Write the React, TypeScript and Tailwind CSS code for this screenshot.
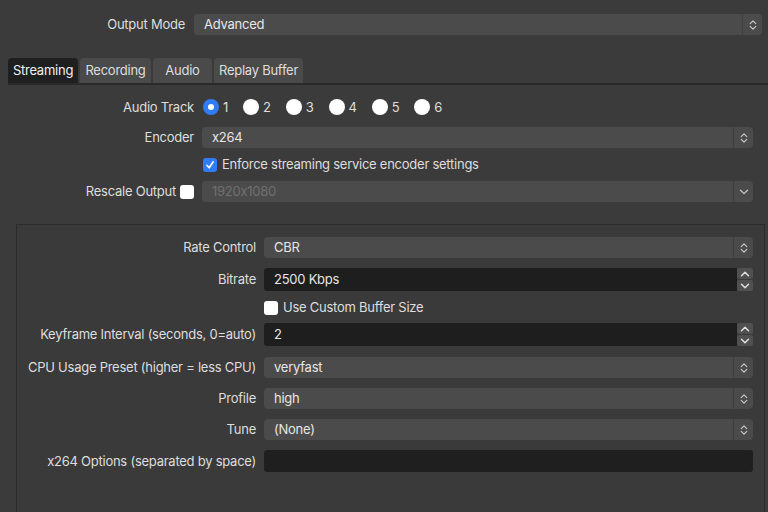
import type { ReactNode } from 'react'

function UpDown() {
  return (
    <svg width="8" height="12" viewBox="0 0 8 12" fill="none" stroke="#c8c8c8" strokeWidth="1.2" strokeLinecap="round" strokeLinejoin="round">
      <path d="M1.2 4.6 L4 1.8 L6.8 4.6" />
      <path d="M1.2 7.4 L4 10.2 L6.8 7.4" />
    </svg>
  )
}

function Combo({ value, disabled, single }: { value: string; disabled?: boolean; single?: boolean }) {
  return (
    <div className="flex h-[21px] flex-1 rounded-[4px] bg-[#4b4b4b] overflow-hidden">
      <div className={`flex flex-1 items-center pl-[10px] pt-px ${disabled ? 'text-[#707070]' : 'text-[#e6e6e6]'}`}>{value}</div>
      <div className="w-px bg-[#3e3e3e]" />
      <div className="flex w-[19px] items-center justify-center">
        {single ? (
          <svg width="10" height="6" viewBox="0 0 10 6" fill="none" stroke="#c8c8c8" strokeWidth="1.3" strokeLinecap="round" strokeLinejoin="round">
            <path d="M1.5 1.2 L5 4.6 L8.5 1.2" />
          </svg>
        ) : (
          <UpDown />
        )}
      </div>
    </div>
  )
}

function SpinBox({ value }: { value: string }) {
  return (
    <div className="flex h-[23px] flex-1">
      <div className="flex flex-1 items-center rounded-l-[3px] bg-[#1e1e1e] pl-[10px] pt-px text-[#e6e6e6]">{value}</div>
      <div className="flex w-[16px] flex-col gap-px">
        {[0, 1].map(i => (
          <div key={i} className="flex h-[11px] items-center justify-center rounded-[2px] bg-[#505050]">
            <svg width="10" height="6" viewBox="0 0 10 6" fill="none" stroke="#e0e0e0" strokeWidth="1.5" strokeLinecap="round" strokeLinejoin="round">
              <path d={i === 0 ? 'M1.5 4.8 L5 1.3 L8.5 4.8' : 'M1.5 1.2 L5 4.7 L8.5 1.2'} />
            </svg>
          </div>
        ))}
      </div>
    </div>
  )
}

function Check({ checked }: { checked?: boolean }) {
  return checked ? (
    <span className="flex h-[14px] w-[14px] shrink-0 items-center justify-center rounded-[3px] bg-[#2f7cf6]">
      <svg width="10" height="10" viewBox="0 0 10 10" fill="none" stroke="#fff" strokeWidth="1.6" strokeLinecap="round" strokeLinejoin="round">
        <path d="M2 5.4 L4.2 7.8 L8.2 1.8" />
      </svg>
    </span>
  ) : (
    <span className="h-[14px] w-[14px] shrink-0 rounded-[3px] bg-white" />
  )
}

function Radio({ checked, label }: { checked?: boolean; label: string }) {
  return (
    <div className="flex items-center gap-[4px]">
      {checked ? (
        <span className="flex h-[16px] w-[16px] items-center justify-center rounded-full bg-[#2f7cf6]">
          <span className="h-[6px] w-[6px] rounded-full bg-white" />
        </span>
      ) : (
        <span className="h-[16px] w-[16px] rounded-full bg-white" />
      )}
      <span className="pt-px">{label}</span>
    </div>
  )
}

function Row({ label, width, children, className = '' }: { label?: ReactNode; width: string; children: ReactNode; className?: string }) {
  return (
    <div className={`flex items-center gap-[8px] ${className}`}>
      <div className={`${width} shrink-0 pt-px text-right`}>{label}</div>
      {children}
    </div>
  )
}

export default function App() {
  const tabs = [
    { name: 'Streaming', w: 'w-[70px] bg-[#1f1f1f] text-[#f0f0f0]' },
    { name: 'Recording', w: 'w-[71px] bg-[#4a4a4a]' },
    { name: 'Audio', w: 'w-[59px] bg-[#4a4a4a]' },
    { name: 'Replay Buffer', w: 'w-[89px] bg-[#4a4a4a]' },
  ]

  return (
    <div
      className="h-[512px] w-[768px] overflow-hidden bg-[#3b3b3b] text-[13px] tracking-[-0.25px] text-[#dedede] [font-feature-settings:'calt'_0]"
      style={{ fontFamily: 'Inter, "Noto Sans", sans-serif' }}
    >
      <div className="flex items-center gap-[9px] pt-[14px] pr-[6px]">
        <div className="w-[185px] shrink-0 pt-px text-right">Output Mode</div>
        <Combo value="Advanced" />
      </div>

      <div className="mt-[23px] pl-[8px]">
        <div className="flex gap-[2px]">
          {tabs.map(t => (
            <div
              key={t.name}
              className={`flex h-[25px] items-center justify-center whitespace-nowrap rounded-t-[4px] pt-px ${t.w}`}
            >
              {t.name}
            </div>
          ))}
        </div>
        <div className="h-[2px] bg-[#2a2a2a]" />
      </div>

      <div className="pr-[15px]">
        <Row label="Audio Track" width="w-[194px]" className="mt-[11px] h-[22px]">
          <div className="ml-px flex items-center gap-[15px]">
            <Radio checked label="1" />
            <Radio label="2" />
            <Radio label="3" />
            <Radio label="4" />
            <Radio label="5" />
            <Radio label="6" />
          </div>
        </Row>
        <Row label="Encoder" width="w-[193px]" className="mt-[9px] pl-px">
          <Combo value="x264" />
        </Row>
        <Row width="w-[194px]" className="mt-[6px] h-[21px]">
          <div className="ml-px flex items-center gap-[5px]">
            <Check checked />
            <span className="pt-px">Enforce streaming service encoder settings</span>
          </div>
        </Row>
        <Row
          width="w-[194px]"
          className="mt-[6px]"
          label={
            <div className="flex items-center justify-end gap-[4px]">
              <span>Rescale Output</span>
              <Check />
            </div>
          }
        >
          <Combo value="1920x1080" disabled single />
        </Row>
      </div>

      <div className="ml-[16px] mt-[22px] h-[320px] w-[749px] border border-[#2b2b2b] bg-[#3a3a3a] pt-[12px] pr-[11px]">
        <Row label="Rate Control" width="w-[239px]">
          <Combo value="CBR" />
        </Row>
        <Row label="Bitrate" width="w-[239px]" className="mt-[10px]">
          <SpinBox value="2500 Kbps" />
        </Row>
        <Row width="w-[239px]" className="mt-[6px] h-[21px]">
          <div className="flex items-center gap-[5px]">
            <Check />
            <span className="pt-px">Use Custom Buffer Size</span>
          </div>
        </Row>
        <Row label="Keyframe Interval (seconds, 0=auto)" width="w-[239px]" className="mt-[5px]">
          <SpinBox value="2" />
        </Row>
        <Row label="CPU Usage Preset (higher = less CPU)" width="w-[239px]" className="mt-[11px]">
          <Combo value="veryfast" />
        </Row>
        <Row label="Profile" width="w-[239px]" className="mt-[10px]">
          <Combo value="high" />
        </Row>
        <Row label="Tune" width="w-[239px]" className="mt-[10px]">
          <Combo value="(None)" />
        </Row>
        <Row label="x264 Options (separated by space)" width="w-[239px]" className="mt-[10px]">
          <div className="h-[22px] flex-1 rounded-[3px] bg-[#1f1f1f]" />
        </Row>
      </div>
    </div>
  )
}
